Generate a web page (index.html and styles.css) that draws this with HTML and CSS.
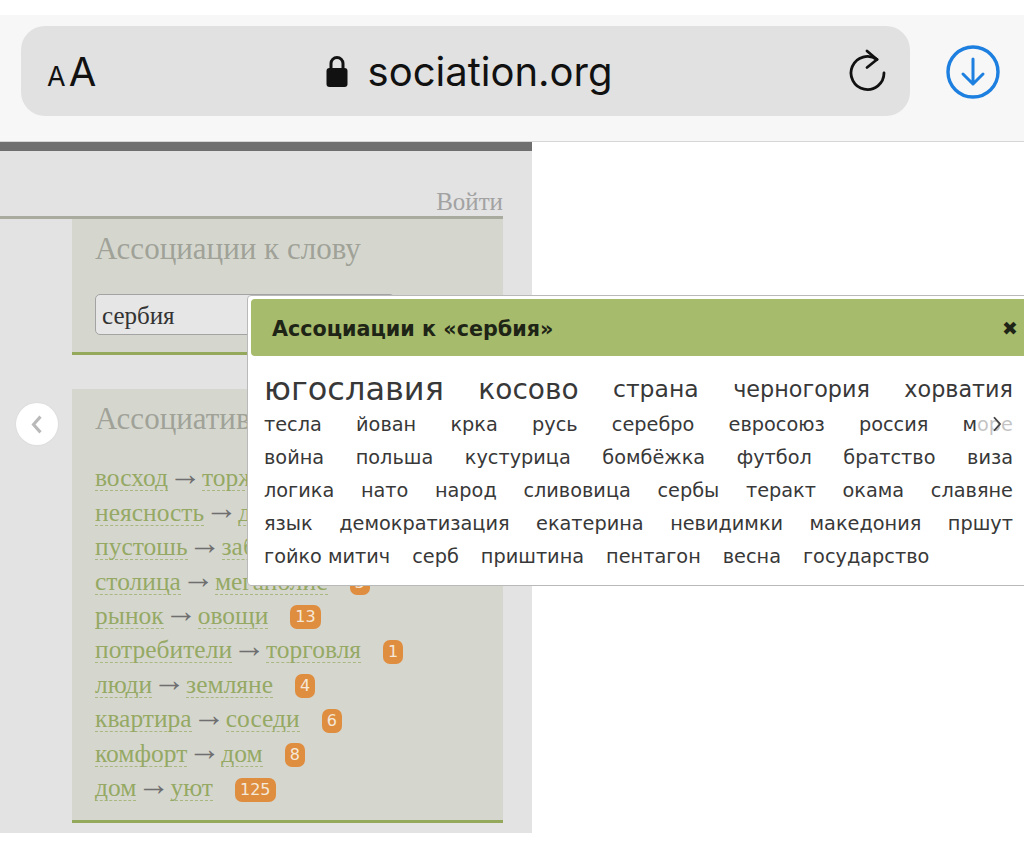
FILE: index.html
```html
<!DOCTYPE html>
<html lang="ru">
<head>
<meta charset="utf-8">
<title>sociation.org</title>
<link rel="stylesheet" href="styles.css">
</head>
<body>
<header class="toolbar">
  <div class="urlbar">
    <span class="aa"><span class="aa-small">A</span><span class="aa-big">A</span></span>
    <span class="address">
      <svg class="lock" viewBox="0 0 24 34" width="24" height="34"><path d="M6 15V9.500a6 6 0 0 1 12 0V15" fill="none" stroke="#111" stroke-width="3"/><rect x="1.500" y="14" width="21" height="19" rx="3" fill="#111"/></svg>
      <span class="host">sociation.org</span>
    </span>
    <svg class="reload" viewBox="0 0 40 46" width="40" height="46"><path d="M29 11.500A16.500 16.500 0 1 0 36 25" fill="none" stroke="#111" stroke-width="2.800" stroke-linecap="round"/><path d="M19 3l10 8.500-10 8" fill="none" stroke="#111" stroke-width="2.800" stroke-linecap="round" stroke-linejoin="round"/></svg>
  </div>
  <svg class="download" viewBox="0 0 56 56" width="56" height="56"><circle cx="28" cy="28" r="25" fill="none" stroke="#1d7fe0" stroke-width="3.400"/><path d="M28 15v25M18 30l10 10 10-10" fill="none" stroke="#1d7fe0" stroke-width="3" stroke-linecap="round" stroke-linejoin="round"/></svg>
</header>

<main class="page">
  <div class="page-top"></div>
  <div class="login-row"><a class="login">Войти</a></div>
  <section class="panel search-panel">
    <h2 class="panel-title">Ассоциации к слову</h2>
    <div class="search-input">сербия</div>
  </section>
  <section class="panel list-panel">
    <h2 class="panel-title">Ассоциативные цепочки</h2>
    <ul class="chains">
      <li><a>восход</a><i>→</i><a>торжество</a><b>2</b></li>
      <li><a>неясность</a><i>→</i><a>дымка</a><b>3</b></li>
      <li><a>пустошь</a><i>→</i><a>забвение</a><b>5</b></li>
      <li><a>столица</a><i>→</i><a>мегаполис</a><b>3</b></li>
      <li><a>рынок</a><i>→</i><a>овощи</a><b>13</b></li>
      <li><a>потребители</a><i>→</i><a>торговля</a><b>1</b></li>
      <li><a>люди</a><i>→</i><a>земляне</a><b>4</b></li>
      <li><a>квартира</a><i>→</i><a>соседи</a><b>6</b></li>
      <li><a>комфорт</a><i>→</i><a>дом</a><b>8</b></li>
      <li><a>дом</a><i>→</i><a>уют</a><b>125</b></li>
    </ul>
  </section>
</main>

<aside class="popup">
  <div class="popup-head"><span>Ассоциации к «сербия»</span><span class="close">✖</span></div>
  <div class="cloud">
    <div class="row row-1"><span class="w1">югославия</span><span class="w2">косово</span><span class="w3">страна</span><span class="w4">черногория</span><span class="w4">хорватия</span></div>
    <div class="row"><span>тесла</span><span>йован</span><span>крка</span><span>русь</span><span>серебро</span><span>евросоюз</span><span>россия</span><span>море</span></div>
    <div class="row"><span>война</span><span>польша</span><span>кустурица</span><span>бомбёжка</span><span>футбол</span><span>братство</span><span>виза</span></div>
    <div class="row"><span>логика</span><span>нато</span><span>народ</span><span>сливовица</span><span>сербы</span><span>теракт</span><span>окама</span><span>славяне</span></div>
    <div class="row"><span>язык</span><span>демократизация</span><span>екатерина</span><span>невидимки</span><span>македония</span><span>пршут</span></div>
    <div class="row row-last"><span>гойко митич</span><span>серб</span><span>приштина</span><span>пентагон</span><span>весна</span><span>государство</span></div>
  </div>
</aside>

<div class="nav nav-left"><svg viewBox="0 0 16 24" width="14" height="21"><path d="M12 3L4 12l8 9" fill="none" stroke="#b9b9b9" stroke-width="3.500"/></svg></div>
<div class="nav nav-right"><svg viewBox="0 0 16 24" width="12" height="18"><path d="M4 3l8 9-8 9" fill="none" stroke="#444" stroke-width="2.500"/></svg></div>
</body>
</html>
```
FILE: styles.css
```css
* { box-sizing: border-box; }
html, body { margin: 0; height: 852px; overflow: hidden; background: #fff; }
body { position: relative; font-family: "Liberation Serif", serif; padding-top: 15px; }

.toolbar {
  height: 127px;
  background: #f7f7f7;
  border-bottom: 1px solid #d6d6d6;
  padding: 11px 23px 0 21px;
  display: flex;
  align-items: flex-start;
  justify-content: space-between;
}
.urlbar {
  width: 889px;
  height: 90px;
  background: #e1e1e1;
  border-radius: 24px;
  display: flex;
  align-items: center;
  padding: 0 22px 0 26px;
  justify-content: space-between;
  font-family: "Inter", "Liberation Sans", sans-serif;
  color: #111;
}
.aa { display: flex; align-items: baseline; gap: 3px; width: 50px; }
.aa-small { font-size: 27px; }
.aa-big { font-size: 40px; }
.address { display: flex; align-items: center; gap: 19px; margin-right: 8px; }
.lock { display: block; }
.host { font-size: 40px; letter-spacing: 0; }
.reload { display: block; }
.download { margin-top: 18px; display: block; }

.page {
  width: 532px;
  height: 691px;
  background: #e3e3e3;
}
.page-top { height: 9px; background: #6f6f6f; }
.login-row {
  margin-right: 29px;
  height: 68px;
  border-bottom: 3px solid #a9ab9e;
  display: flex;
  align-items: flex-end;
  justify-content: flex-end;
}
.login { font-size: 25px; line-height: 28px; color: #a2a2a2; }
.panel {
  margin: 0 29px 0 72px;
  background: #d5d7cf;
  padding: 0 23px;
}
.panel-title {
  margin: 0;
  font-weight: normal;
  font-size: 31px;
  line-height: 32px;
  white-space: nowrap;
  color: #a0a298;
}
.search-panel { height: 136px; border-bottom: 3px solid #94a95c; padding-top: 14px; }
.search-input {
  margin-top: 29px;
  width: 300px;
  height: 41px;
  background: #e6e6e6;
  border: 1.500px solid #a3a3a3;
  border-radius: 5px;
  padding: 2px 0 0 6px;
  font-size: 25px;
  line-height: 38px;
  color: #333;
}
.list-panel { margin-top: 34px; height: 434px; border-bottom: 3px solid #94a95c; padding-top: 14px; }
.chains { list-style: none; margin: 26px 0 0; padding: 0; }
.chains li {
  height: 34.440px;
  display: flex;
  align-items: center;
  font-size: 25.500px;
}
.chains a {
  color: #95a964;
  border-bottom: 1px dashed #a8b880;
  line-height: 25px;
}
.chains i {
  font-style: normal;
  font-size: 33px;
  line-height: 25px;
  color: #6f6f6f;
  margin: 0 0.500px 8px;
}
.chains b {
  margin: 3px 0 0 22px;
  min-width: 20px;
  height: 24px;
  padding: 0 5px;
  border-radius: 7px;
  background: #df8d3f;
  color: #f5e8d8;
  font: normal 16px/24px "DejaVu Sans", sans-serif;
  text-align: center;
}

.popup {
  position: absolute;
  left: 247px;
  top: 295px;
  width: 800px;
  height: 291px;
  background: #fff;
  border: 1px solid #b9b9b9;
  border-radius: 4px;
  padding: 3px;
  font-family: "DejaVu Sans", sans-serif;
}
.popup-head {
  height: 57px;
  background: #a6bb6b;
  border-radius: 4px;
  padding: 3px 21px 0;
  display: flex;
  align-items: center;
  font-weight: bold;
  font-size: 20.700px;
  color: #1e2416;
}
.close { position: absolute; left: 754px; top: 21px; font-size: 19px; }
.cloud { width: 749px; margin: 14px 0 0 13px; color: #383838; font-size: 19.300px; }
.row { display: flex; justify-content: space-between; align-items: center; height: 33px; white-space: nowrap; }
.row-1 { height: 38px; }
.row-last { justify-content: flex-start; gap: 22px; }
.w1 { font-size: 32px; }
.w2 { font-size: 28px; }
.w3 { font-size: 23.500px; }
.w4 { font-size: 22.300px; }

.nav {
  position: absolute;
  width: 42px;
  height: 42px;
  border-radius: 50%;
  display: flex;
  align-items: center;
  justify-content: center;
}
.nav-left { left: 16px; top: 403px; background: #fff; box-shadow: 0 0 2px rgba(0,0,0,.08); }
.nav-right { left: 976px; top: 403px; background: rgba(255,255,255,.7); }
```
